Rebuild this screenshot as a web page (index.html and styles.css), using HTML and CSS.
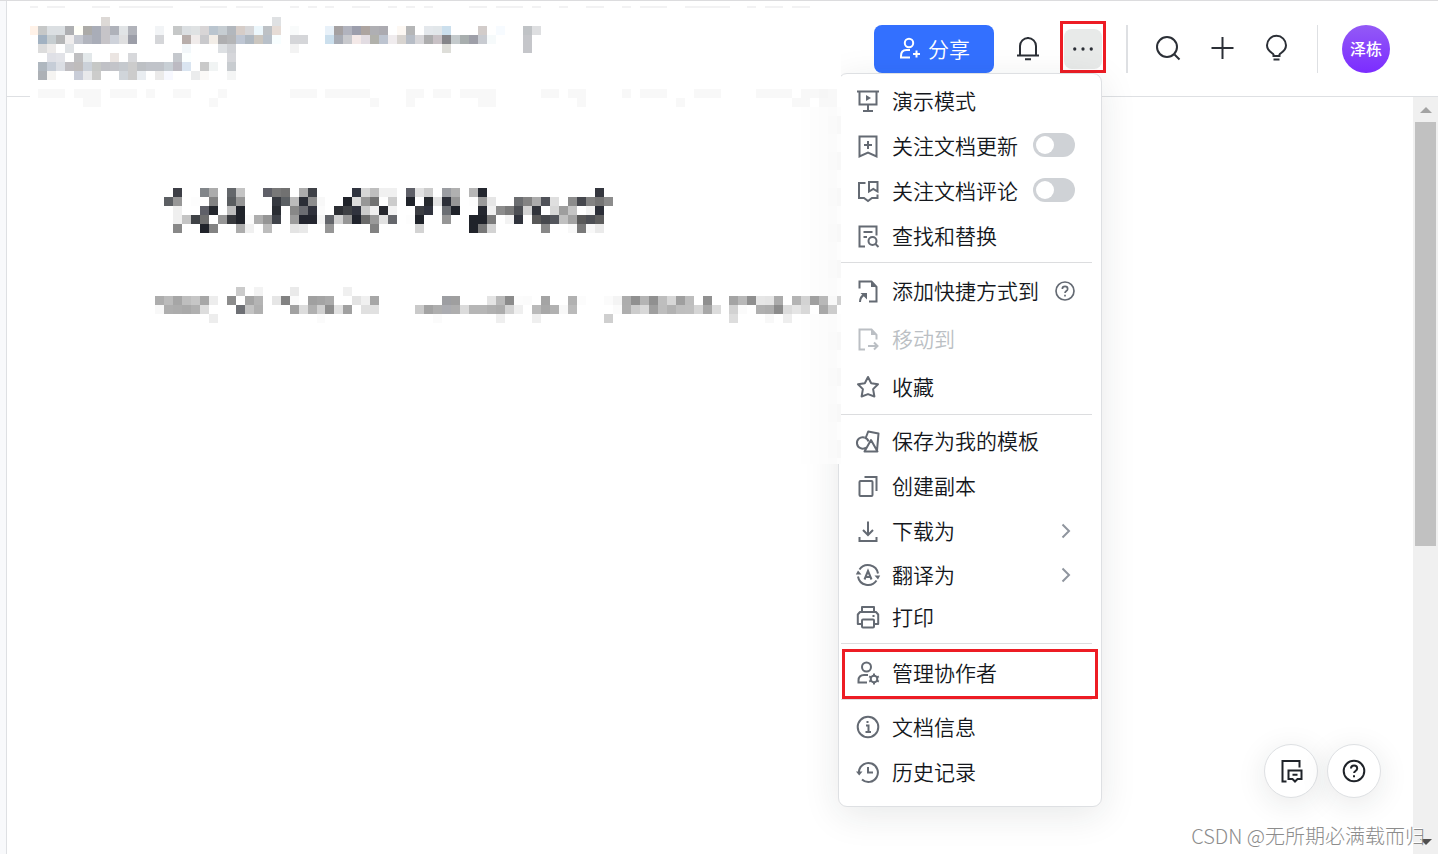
FILE: index.html
```html
<!DOCTYPE html>
<html lang="zh-CN">
  <head>
    <meta charset="UTF-8">
    <title>云文档</title>
    <link rel="stylesheet" href="styles.css">
  </head>
  <body>
    <div class="rail"></div>

    <div class="page">
      <header class="topbar">
        <button class="share-btn">
          <svg class="icon" viewBox="0 0 24 24"><circle cx="11" cy="7" r="4.2"/><path d="M12 14H8.500C5 14 3 16.500 3 20v1.500h9M18.500 14.500v7M15 18h7"/></svg>
          分享
        </button>
        <button class="icon-btn bell" aria-label="通知">
          <svg class="icon" viewBox="0 0 24 24"><path d="M4 19v-9a8 8 0 0 1 16 0v9M1 19.500h22M9 23.300h6M12 1v1"/></svg>
        </button>
        <div class="more">
          <button class="more-btn" aria-label="更多">
            <svg class="dots" viewBox="0 0 24 24"><circle cx="3" cy="12" r="1.800"/><circle cx="12" cy="12" r="1.800"/><circle cx="21" cy="12" r="1.800"/></svg>
          </button>

          <div class="menu">
            <div class="menu-group">
              <button class="menu-item">
                <svg class="icon" viewBox="0 0 24 24"><path d="M1 2.500h22M3.500 3v12.500h17V3M12 15.500v6M7 22h10"/><path class="fill" d="M10 6l5 3-5 3z"/></svg>
                演示模式
              </button>
              <label class="menu-item">
                <svg class="icon" viewBox="0 0 24 24"><path d="M3.500 2.500h17v20L12 18.500l-8.500 4zM12 7v8M8 11h8"/></svg>
                关注文档更新
                <input class="switch" type="checkbox">
              </label>
              <label class="menu-item">
                <svg class="icon" viewBox="0 0 24 24"><path d="M9.500 4H3v15h5l4 3 4-3h5.500v-3.500M13 3h8.500v9.500L17.300 10 13 12.500z"/></svg>
                关注文档评论
                <input class="switch" type="checkbox">
              </label>
              <button class="menu-item">
                <svg class="icon" viewBox="0 0 24 24"><path d="M9 22.500H3.500v-20h17v9M7.500 8h9M7.500 13H11"/><circle cx="16.500" cy="17" r="4"/><path d="M19.500 20l3 3"/></svg>
                查找和替换
              </button>
            </div>

            <div class="menu-group roomy">
              <button class="menu-item">
                <svg class="icon" viewBox="0 0 24 24"><path d="M3.500 9.500v-7h12l5 5.500v14.500H13M4 23c0-4 1.500-6 4.500-7.500"/><path class="fill" d="M15 2v6h6zM4.500 14H11v6.500z"/></svg>
                添加快捷方式到
                <svg class="help" viewBox="0 0 24 24"><circle cx="12" cy="12" r="10.800"/><path d="M8.800 9.500c0-4 6.400-4 6.400 0 0 2.500-3.200 2.400-3.200 4.800M12 16.500v2"/></svg>
              </button>
              <button class="menu-item" disabled>
                <svg class="icon" viewBox="0 0 24 24"><path d="M9 22.500H3.500v-20h12l5 5.500v4.500M12 19h9.500M18 15.500l3.500 3.500-3.500 3.500"/><path class="fill" d="M15 2v6h6z"/></svg>
                移动到
              </button>
              <button class="menu-item">
                <svg class="icon" viewBox="0 0 24 24"><path stroke-linejoin="round" d="M12 2l3.200 6.300 6.800 1-4.900 4.800 1.300 7.400-6.400-2.400-6.400 2.400 1.300-7.400L2 9.300l6.800-1z"/></svg>
                收藏
              </button>
            </div>

            <div class="menu-group exports">
              <button class="menu-item">
                <svg class="icon" viewBox="0 0 24 24"><path stroke-linejoin="round" d="M8.500 8.500A5.700 5.700 0 1 0 10 18.500M9.500 9.500l2.700-7 10.300 2-1.500 17M15 11l6.500 11.500h-13z"/><path d="M8.500 8.500c2 .5 3.500 2 4 4"/></svg>
                保存为我的模板
              </button>
              <button class="menu-item">
                <svg class="icon" viewBox="0 0 24 24"><rect x="3.500" y="7" width="13" height="15" rx="1"/><path d="M8.500 3h12v14"/></svg>
                创建副本
              </button>
              <button class="menu-item">
                <svg class="icon" viewBox="0 0 24 24"><path d="M12 2.500v13M7 11l5 5 5-5M3.500 18v4h17v-4"/></svg>
                下载为
                <svg class="chevron" viewBox="0 0 18 18"><path d="M5.500 2.500L12 9l-6.500 6.500"/></svg>
              </button>
              <button class="menu-item compact">
                <svg class="icon" viewBox="0 0 24 24"><path d="M3.500 6.500A10.200 10.200 0 0 1 22 10.500M2 13.500a10.200 10.200 0 0 0 18.500 4M8.500 16.500L12 8l3.500 8.500M9.800 14h4.400"/><path class="fill" d="M-.2 11.500L2 7.500l3.500 4zM18.500 12.500h5.700L22 16.500z"/></svg>
                翻译为
                <svg class="chevron" viewBox="0 0 18 18"><path d="M5.500 2.500L12 9l-6.500 6.500"/></svg>
              </button>
              <button class="menu-item compact">
                <svg class="icon" viewBox="0 0 24 24"><path stroke-linejoin="round" d="M6 7V2h12v5M6 19H1.800V9.500L4 7h16l2.200 2.500V19H18"/><rect x="6" y="14.500" width="12" height="8" rx="1"/><path d="M16.500 11h2"/></svg>
                打印
              </button>
            </div>

            <div class="menu-group marked">
              <button class="menu-item highlight">
                <svg class="icon" viewBox="0 0 24 24"><circle cx="10.500" cy="6" r="4.500"/><path d="M12 14H8c-3.500 0-5.500 2-5.500 5.500v2H11"/><circle class="gear" cx="18" cy="18" r="3.300"/><path d="M18 12.500v2M18 21.500v2M13.200 15.300l1.800 1M21 19.700l1.800 1M13.200 20.700l1.800-1M21 16.300l1.800-1"/></svg>
                管理协作者
              </button>
            </div>

            <div class="menu-group">
              <button class="menu-item">
                <svg class="icon" viewBox="0 0 24 24"><circle cx="12" cy="12" r="10.300"/><path d="M10 10.500h2.500v6.500M9.500 17h5.500M11.500 6v2"/></svg>
                文档信息
              </button>
              <button class="menu-item">
                <svg class="icon" viewBox="0 0 24 24"><path d="M3 13.500V11a9.500 9.500 0 1 1 3 8.500M12 7v5.500h5"/><path class="fill" d="M0 11.500h6.500L3.200 15.500z"/></svg>
                历史记录
              </button>
            </div>
          </div>
        </div>
        <span class="divider wide"></span>
        <button class="icon-btn" aria-label="搜索">
          <svg class="icon" viewBox="0 0 24 24"><circle cx="11" cy="11" r="10"/><path d="M18.500 18.500L23.500 23.500"/></svg>
        </button>
        <button class="icon-btn" aria-label="新建">
          <svg class="icon" viewBox="0 0 24 24"><path d="M12.500 1v22M1.500 12h22"/></svg>
        </button>
        <button class="icon-btn" aria-label="帮助">
          <svg class="icon" viewBox="0 0 24 24"><path d="M9.500 20v-1.500C9 17 3 15.500 3 9.300a9.500 9.500 0 0 1 19 0C22 15.500 16 17 15.500 18.500V20zM9.500 23.500h6"/></svg>
        </button>
        <span class="divider"></span>
        <div class="avatar">泽栋</div>
      </header>

      <main class="doc">
        <div class="paper"></div>
        <div class="scrollbar">
          <span class="arrow up"></span>
          <span class="thumb"></span>
          <span class="arrow down"></span>
        </div>
      </main>
    </div>

    <svg class="mosaic" id="mosaic" viewBox="0 0 811 458" aria-hidden="true"></svg>

    <div class="float-btns">
      <button class="float-btn" aria-label="评论">
        <svg class="icon" viewBox="0 0 24 24"><path d="M7.500 22.500H3.500v-20.500h17v6.500M9.500 11.500h13v8.500H18.500l-2.500 2.500-2.500-2.500h-4zM13.500 15.800h5"/></svg>
      </button>
      <button class="float-btn" aria-label="帮助中心">
        <svg class="icon" viewBox="0 0 24 24"><circle cx="12" cy="12" r="10.300"/><path d="M9 9.500c0-4 6.200-4 6.200 0 0 2.500-3.100 2.400-3.100 4.500M12 16.200v2"/></svg>
      </button>
    </div>

    <div class="watermark">CSDN @无所期必满载而归</div>

    <script src="script.js"></script>
  </body>
</html>
```
FILE: styles.css
```css
* {
  box-sizing: border-box;
}
body {
  margin: 0;
  min-height: 100vh;
  display: flex;
  position: relative;
  overflow: hidden;
  background: #fff;
  color: #1f2329;
  font-family: "Noto Sans CJK SC", sans-serif;
  font-size: 21px;
  font-weight: 350;
  border-top: 1px solid #dcdcde;
}
button {
  font: inherit;
  color: inherit;
  background: none;
  border: 0;
  padding: 0;
  cursor: pointer;
}
.icon {
  width: 24px;
  height: 24px;
  flex: none;
  overflow: visible;
}
svg {
  fill: none;
  stroke: currentColor;
  stroke-width: 2;
}
.fill {
  fill: currentColor;
  stroke: none;
}
.rail {
  width: 7px;
  flex: none;
  background: #f8f9fb;
  border-right: 1px solid #dee0e3;
}
.page {
  flex: 1;
  display: flex;
  flex-direction: column;
}

/* top bar */
.topbar {
  height: 96px;
  display: flex;
  align-items: center;
  justify-content: flex-end;
  padding-right: 48px;
  border-bottom: 1px solid #dee0e3;
  color: #2b2f36;
}
.share-btn {
  width: 120px;
  height: 48px;
  display: flex;
  align-items: center;
  justify-content: center;
  gap: 6px;
  border-radius: 8px;
  background: #3370ff;
  color: #fff;
  line-height: 28px;
  padding-bottom: 2px;
}
.icon-btn {
  width: 54px;
  height: 48px;
  padding-bottom: 2px;
  display: flex;
  align-items: center;
  justify-content: center;
}
.bell {
  width: 36px;
  margin: 0 14px 0 16px;
}
.more {
  position: relative;
  margin-bottom: 4px;
}
.more-btn {
  display: block;
  width: 46px;
  height: 52px;
  padding: 5px 1px 1px;
  border: 3px solid #ed1c24;
}
.dots {
  display: block;
  width: 100%;
  height: 40px;
  padding: 8px;
  border-radius: 8px;
  background: #e8eae9;
  fill: currentColor;
  stroke: none;
}
.divider {
  width: 1px;
  height: 48px;
  margin: 0 24px 0 14px;
  background: #dee0e3;
}
.divider.wide {
  width: 2px;
  margin: 0 13px 0 20px;
}
.avatar {
  width: 48px;
  height: 48px;
  border-radius: 50%;
  background: linear-gradient(#935af6, #7b2cff);
  color: #fff;
  font-size: 16px;
  font-weight: 500;
  line-height: 46px;
  text-align: center;
}

/* drop-down menu */
.menu {
  position: absolute;
  top: 100%;
  right: 4px;
  z-index: 1;
  width: 264px;
  padding: 0 1px 8px 2px;
  border: 1px solid #dee0e3;
  border-radius: 9px;
  background: #fff;
  color: #14171c;
  box-shadow: 0 8px 36px rgba(31, 35, 41, 0.1);
}
.menu-group {
  display: flex;
  flex-direction: column;
  padding: 4px 0;
  position: relative;
}
.menu-group:not(:last-child)::after {
  content: "";
  height: 1px;
  margin: 4px 8px -5px 0;
  background: #dcdddf;
}
.menu-item {
  height: 45px;
  display: flex;
  align-items: center;
  gap: 12px;
  padding: 0 25px 0 15px;
  line-height: 28px;
  white-space: nowrap;
  cursor: pointer;
}
.menu-item .icon,
.menu-item .help {
  margin-top: 2px;
  color: #646a73;
}
.roomy .menu-item {
  height: 48px;
}
.menu-item.compact {
  height: 42px;
}
.menu-item:disabled,
.menu-item:disabled .icon {
  color: #bbbfc4;
}
.menu-item.highlight {
  height: 50px;
  margin: 0 2px 0 1px;
  padding: 0 11px 4px;
  border: 3px solid #ed1c24;
}
.menu-group.exports {
  padding-bottom: 6px;
}
.menu-group.exports::after {
  margin: 6px 8px -7px 0;
}
.menu-group.marked {
  padding: 6px 0 1px;
}
.menu-group.marked::after {
  margin: 0 8px -1px 0;
}
.help {
  width: 20px;
  height: 20px;
  margin-left: auto;
}
.chevron {
  width: 18px;
  height: 18px;
  margin: 2px 0 0 auto;
  color: #8f959e;
}
.switch {
  appearance: none;
  width: 42px;
  height: 24px;
  margin: 0 0 0 auto;
  padding: 3px;
  border-radius: 12px;
  background: #cfd2d6;
}
.switch::before {
  content: "";
  display: block;
  width: 18px;
  height: 18px;
  border-radius: 50%;
  background: #fff;
}
.switch:checked {
  padding-left: 21px;
  background: #3370ff;
}

/* document area */
.doc {
  flex: 1;
  display: flex;
}
.paper {
  flex: 1;
}
.scrollbar {
  width: 25px;
  display: flex;
  flex-direction: column;
  align-items: center;
  background: #f0f0f0;
}
.thumb {
  width: 21px;
  height: 56%;
  background: #c1c1c1;
}
.arrow {
  border: 6px solid transparent;
}
.arrow.up {
  margin: 4px 0 9px;
  border-bottom-color: #a3a3a3;
}
.arrow.down {
  margin: auto 0 3px;
  border-top-color: #505050;
}

/* pixelated cover over the title and body text */
.mosaic {
  position: absolute;
  top: 5px;
  left: 30px;
  z-index: 2;
  width: 811px;
  height: 458px;
  stroke: none;
  shape-rendering: crispEdges;
  pointer-events: none;
}

.float-btns {
  position: absolute;
  right: 57px;
  bottom: 56px;
  display: flex;
  gap: 9px;
}
.float-btn {
  width: 54px;
  height: 54px;
  display: flex;
  align-items: center;
  justify-content: center;
  border: 1px solid #dee0e3;
  border-radius: 50%;
  background: #fff;
  box-shadow: 0 6px 30px rgba(31, 35, 41, 0.1);
}
.watermark {
  position: absolute;
  right: 13px;
  bottom: 3px;
  color: #8c8c8c;
  font-size: 20px;
  font-weight: 300;
  line-height: 30px;
  text-shadow: -1px -1px 0 #fff;
}
```
FILE: script.js
```js
// Cells are 9px squares. Each run is [row, first column, colours],
// a two-digit colour is a grey level and "-" is an empty cell.
const CELL = 9;
const runs = [
  [1, 8, "ddd9d6"],
  [1, 27, "dfe1e3"],
  [2, 0, "fff2e8 c6c8c8 dbdfe2 dbdfe2 aeafb2 fffff8 acaba8 a9adb8 c6c4c8 afb2ba e1e4e6 b1b3ba - - f2f4f6 - c6c8c8 dbdfe2 dfe2e3 d8d5d6 bac5cf c6cdd2 b2b7bd d6cdc8 d6d6d8 ecf7fc bdc1c5 e6dcd6 - f9fbfb"],
  [2, 33, "e8f1f9 a5a1a2 b1b3be 9c9eac ada4a0 afafb3 acabb1 - fdf8f3 b5b6b7 - e4e8ec e2e7ea cbdfed - - - d2ccca - f7fbff - - c0c3c6 dedfe1"],
  [3, 1, "a2b2c2 c6cdd0 b5b6b7 efeded c6c9d1 b2b5be a9adb8 c6c4c8 ced2da dfdfe0 9c9ea8 - - d5d6d9 - - b8aeab f0ebea c9c9cc f2ede7 afafb1 b4b5b7 bec6d3 afb8c1 cbc6bf b8c0c9 f8feff - d5d6d9 d5d6d9"],
  [3, 33, "cbdfed a8acb5 c8c9cd f4e9e8 e2dce2 b1b1ab bdc4d0 f0ecee d8d4d0 b7bdc6 d7d6d9 adadae c8c1c5 858589 c4cacc a8aeae 9e9fa8 c8cbd1 f6fafb - - - c5c6ca"],
  [4, 1, "dc eceae9 - dfe2e5"],
  [4, 17, "f2f7fa - - - dde0e3 d0d2d6"],
  [4, 29, "f3"],
  [4, 46, "deded9 - - - - - - - - c5c6ca"],
  [5, 2, "dfe0e6 e2e3e8 - bfbfc1 e3e8ea - - ebe5e2 - d7d8db - - - - c5c8cd fbffff - - - - d5d6da"],
  [6, 1, "afb7bf c6cdd7 dbdee4 bfbdc1 bfbcbc cbd1d9 c6c8c6 c0c1c6 c3c4c9 c5c9ce cc bdc0c4 c0c3c9 c0c3c9 c8cfd5 bcbac2 dae5f1 - c9 f1f4f4 - c8ccd0"],
  [7, 1, "adb1b6 f5f4f2 - - c9cdd8 e8e9eb cccccb - - d0d5da cc e9edf1 - ebeaea f7f8ff - - ebeced fbf9f7 - - f4f5f5"],
  [9, 1, "f8 f8 f8 - f8 f8 f8 - f8 f8 f8 - f8 - - f8 f8 - - - f8"],
  [9, 29, "f8 f8 f8 - f8 f8 f8 f8 f8 - - - - f8 f8 - f8 f8 - f8 f8 f8 f8"],
  [9, 57, "f8 f8 - f8 f8 - - - - f8 - f8 f8 f8 - - - f8 f8 f8 - - - - f8 f8 f8 f8 - f8 f8 f6 f8"],
  [10, 6, "f8 f8"],
  [10, 20, "f8"],
  [10, 38, "f8 - - - f8"],
  [10, 50, "f8 f8"],
  [10, 61, "f8 - - - - - - - - - - f8"],
  [10, 85, "f8 f8 - f8 f8"],

  // title
  [20, 16, "3d3f46 - - 82868a ac - 64676b c4 - - 5f6068 78 71 - ac 3e4147 - - - - 303440 d6 be f0 f0 - 5f6068 e2 cc - 9b9da2 b0 - b6 24272f"],
  [20, 63, "35373f"],
  [21, 15, "5c5f63 97 - fd - 83 - 5a5d60 96 - - - 363940 5c6064 bb 2b2e36 8d f8 - - 20232a dc 97 72 fd cc - 20232a - 26292e e3 2c2f38 96 - fd 9b e6 - - 6b6d70 83 ab 505259 df - 8c 45474d 83 75 8c"],
  [22, 16, "ef - - 5f6068 24272d - bd 20232a - - - 2a2d33 - 88 6c6d72 2f313b fb - 2d2f34 3e4044 30333e cc f0 26282e f3 - - 3c3e43 30333e - 6b6e73 1f2229 - - 24272f f0 8c 7b 4d4f54 d3 30333a - d8 9e c4 - f3 2b2e37"],
  [23, 16, "ef c4 3f4246 6f - 96 37393d 20232a fb ae 95 40434a - 9c 24262f 24262f f5 63656a d3 96 20232c 6b 9a e2 65676c - fd 20232a - - 96 - - 20232a 20232a 7b - f3 30333c - 58 46484d 54565d c0 a2 58 4d4f54 5d"],
  [24, 16, "88 - - 20232a 83 - - ac f0 - bd - - e4 e9 - - 96 - - - - 82 - - - - d3 - - - - - 20232a 78 d3 - - - - - 88 - - f8 79 f8 ea"],

  // first line of the body
  [31, 23, "cb - f3 - - - ea - - - - - f0"],
  [32, 14, "ad bb a6 be c6 a7 ed - 8c - a4 b4 - e6 82 fb - a0 a4 aa - - e3 f0 a7"],
  [32, 46, "9d9ea2 9f - - - e4 b9 8b fc fb - a4 - - b1 fc - - fb f4 ad 90 b4 90 be d7 9f bd - 90 - - a4 b8 8f e6 e4 ab - b4 d3 a0 b8 f8 d0"],
  [33, 14, "f8 ae ac a9 b0 dd - - - 6e7075 c3 b0 - - - a1 dc b0 d0 8e e1 a0 - e0 e1"],
  [33, 43, "ca a3 ae abacb1 ae db b6 b6 b0 ac d3 ef - ba a8 b1 f8 ba - - - - fb ae cc d8 9f bd b2 be bf d5 a8 dc - d2 fb - b0 ad 8c dc e5 d8 - a8 cc"],
  [34, 20, "ed"],
  [34, 32, "fb"],
  [34, 45, "fb - - - - - - ef - - - ef - - - - - - - cf"],
  [34, 78, "dd - - - f8 - ee"],
];

// soft menu shadow along the right edge
for (let row = 11; row < 51; row++) {
  if (row === 32 || row === 33) continue;
  runs.push([row, 86, row % 3 ? "fe fd fc" : "fe fd fc"]);
  runs.push([row, 89, row % 4 < 2 ? "fa f8" : "fb fd"]);
}

// thin strip along the top edge
const strip = [
  [0, 1], [2, 2], [7, 2], [10, 6], [19, 3], [23, 3], [29, 1], [31, 1],
  [33, 1], [36, 2], [40, 1], [42, 1], [44, 1], [49, 2], [52, 3], [56, 1],
  [59, 1], [62, 2], [66, 1], [68, 3], [73, 5], [80, 1], [82, 2], [85, 2],
];

let rects = '<rect x="0" y="0" width="811" height="458" fill="#fff"/>';

// columns 32 and 77 are one pixel narrower than the others
function columnX(col) {
  let x = col * CELL - 1;
  if (col > 32) x -= 1;
  if (col > 77) x -= 1;
  return x;
}

function addRect(x, y, width, height, colour) {
  rects += `<rect x="${x}" y="${y}" width="${width}" height="${height}" fill="#${colour}"/>`;
}

runs.forEach(([row, col, colours]) => {
  colours.split(" ").forEach((colour, i) => {
    if (colour === "-") return;
    const hex = colour.length === 2 ? colour.repeat(3) : colour;
    const x = columnX(col + i);
    addRect(x, row * CELL + 2, columnX(col + i + 1) - x, CELL, hex);
  });
});

strip.forEach(([col, count]) => {
  addRect(columnX(col), 0, count * CELL, 2, "f2f2f3");
});

document.getElementById("mosaic").innerHTML = rects;
```
